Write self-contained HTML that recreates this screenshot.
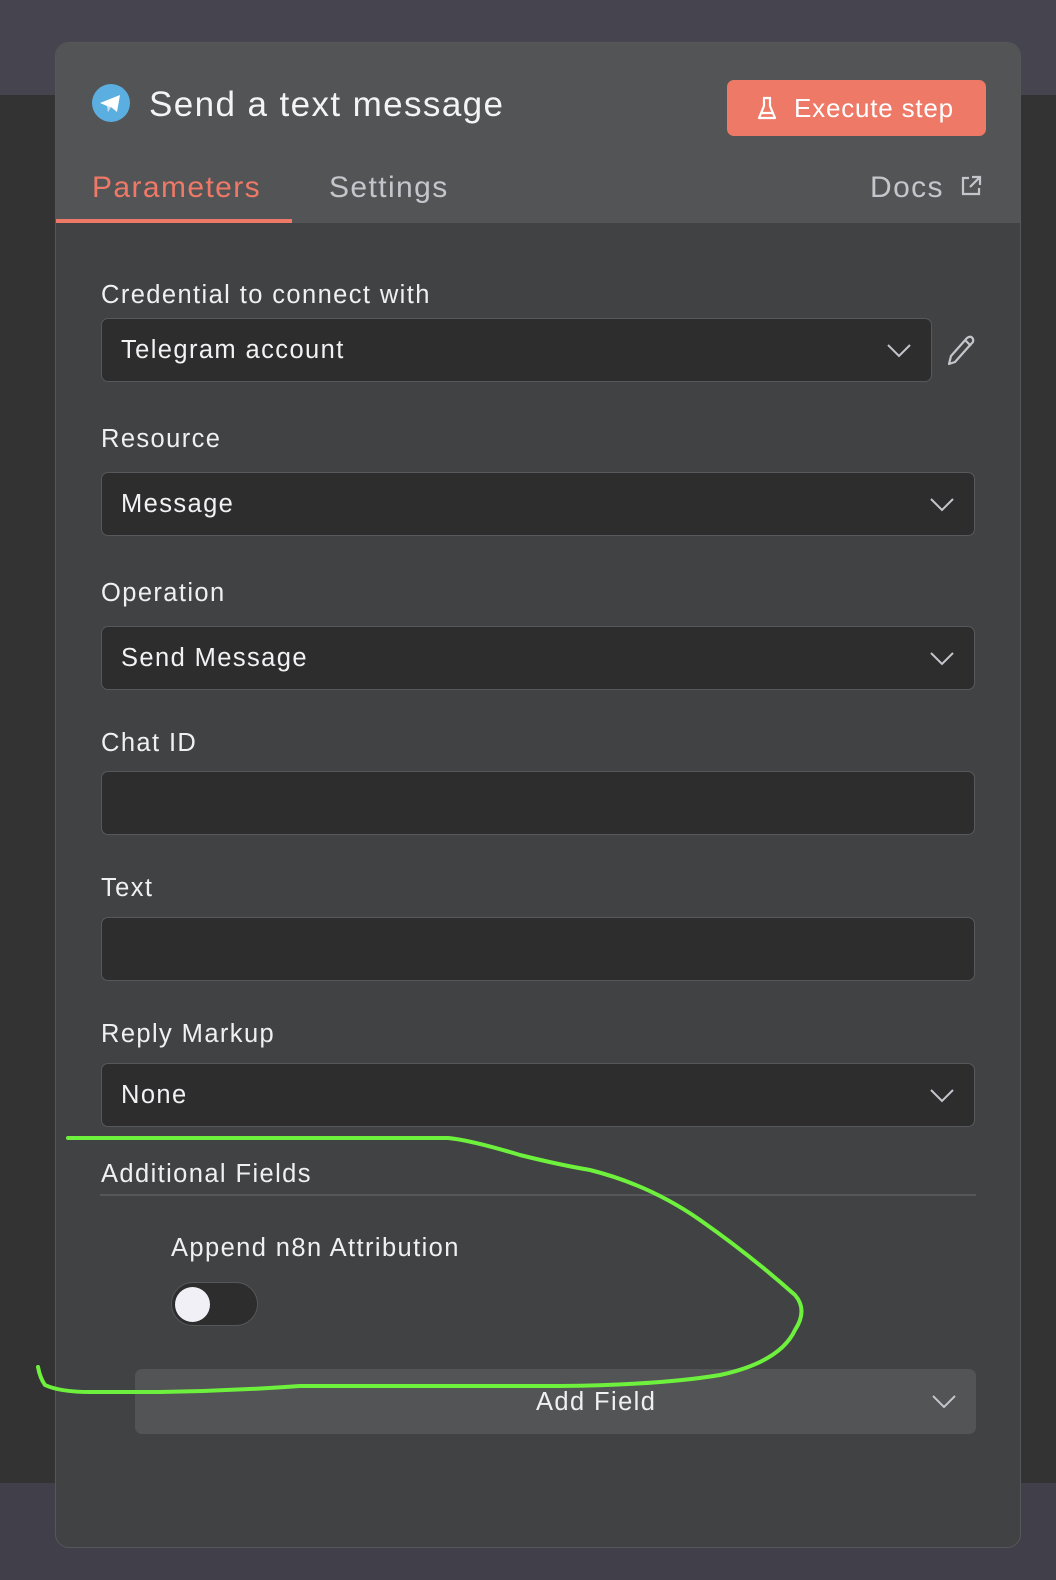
<!DOCTYPE html>
<html><head><meta charset="utf-8"><style>
*{box-sizing:border-box;margin:0;padding:0}
body{width:1056px;height:1580px;position:relative;overflow:hidden;background:#333333;font-family:"Liberation Sans",sans-serif;letter-spacing:1.4px}
.abs{position:absolute}
.lbl{position:absolute;left:101px;color:#f0f0f2;font-size:25.5px;}
.inp{position:absolute;left:101px;width:874px;height:64px;background:#2d2d2e;border:1.5px solid #57585b;border-radius:7px;color:#f2f2f4;font-size:25.5px;padding-left:19px;line-height:63px;}
.chev{position:absolute;right:20px;top:24px;}
</style></head><body>
<div class="abs" style="left:0;top:0;width:1056px;height:95px;background:#45444f"></div>
<div class="abs" style="left:0;top:1483px;width:1056px;height:97px;background:#413f4a"></div>
<div class="abs" style="left:55px;top:42px;width:966px;height:1506px;background:#414244;border:1.5px solid #56575a;border-radius:14px;overflow:hidden">
  <div class="abs" style="left:0;top:0;width:966px;height:180px;background:#535456"></div>
  <div class="abs" style="left:0;top:176px;width:236px;height:4px;background:#ee7967"></div>
</div>
<svg class="abs" style="left:92px;top:84px" width="38" height="38" viewBox="0 0 38 38"><circle cx="19" cy="19" r="19" fill="#5aaee0"/><path d="M8 19 L28 11 L25 28 L19 23 L16 28 L15 22 Z" fill="#fff"/><path d="M15 22 L16 28 L19 23 Z" fill="#c8daea"/></svg>
<div class="abs" style="left:149px;top:85px;color:#f4f4f6;font-size:35px;">Send a text message</div>
<div class="abs" style="left:727px;top:80px;width:259px;height:56px;background:#ee7967;border-radius:7px;color:#fff;font-size:26px;line-height:56px;padding-left:67px;letter-spacing:0.8px">Execute step</div>
<svg class="abs" style="left:756px;top:96px" width="22" height="26" viewBox="0 0 22 26"><path d="M7 2 H15 M8 2 V10 L3 22 H19 L14 10 V2 M5 17 H17" fill="none" stroke="#fff" stroke-width="2.2" stroke-linejoin="round"/></svg>
<div class="abs" style="left:92px;top:171px;color:#ee7967;font-size:30px;">Parameters</div>
<div class="abs" style="left:329px;top:171px;color:#c4c6cc;font-size:30px;">Settings</div>
<div class="abs" style="left:870px;top:171px;color:#c4c6cc;font-size:30px;">Docs</div>
<svg class="abs" style="left:959px;top:174px" width="24" height="24" viewBox="0 0 24 24"><path d="M10 4 H4 V20 H20 V14 M13 3 H21 V11 M21 3 L11 13" fill="none" stroke="#c4c6cc" stroke-width="2.2"/></svg>

<div class="lbl" style="top:281px">Credential to connect with</div>
<div class="inp" style="top:318px;width:831px">Telegram account<svg class="chev" width="24" height="16" viewBox="0 0 24 16"><path d="M1 2 L12 13 L23 2" fill="none" stroke="#c4c6cc" stroke-width="2"/></svg></div>
<svg class="abs" style="left:946px;top:334px" width="30" height="32" viewBox="0 0 30 32"><path d="M5 22 L21 4 Q25 1 27 5 Q28 8 25 10 L9 28 L3 30 Z M19 6 L25 12" fill="none" stroke="#c4c6cc" stroke-width="2.2" stroke-linejoin="round"/></svg>

<div class="lbl" style="top:425px">Resource</div>
<div class="inp" style="top:472px">Message<svg class="chev" width="24" height="16" viewBox="0 0 24 16"><path d="M1 2 L12 13 L23 2" fill="none" stroke="#c4c6cc" stroke-width="2"/></svg></div>
<div class="lbl" style="top:579px">Operation</div>
<div class="inp" style="top:626px">Send Message<svg class="chev" width="24" height="16" viewBox="0 0 24 16"><path d="M1 2 L12 13 L23 2" fill="none" stroke="#c4c6cc" stroke-width="2"/></svg></div>
<div class="lbl" style="top:729px">Chat ID</div>
<div class="inp" style="top:771px"></div>
<div class="lbl" style="top:874px">Text</div>
<div class="inp" style="top:917px"></div>
<div class="lbl" style="top:1020px">Reply Markup</div>
<div class="inp" style="top:1063px">None<svg class="chev" width="24" height="16" viewBox="0 0 24 16"><path d="M1 2 L12 13 L23 2" fill="none" stroke="#c4c6cc" stroke-width="2"/></svg></div>

<div class="lbl" style="top:1160px">Additional Fields</div>
<div class="abs" style="left:100px;top:1194px;width:876px;height:2px;background:#56575a"></div>
<div class="abs" style="left:171px;top:1234px;color:#f0f0f2;font-size:25.5px;">Append n8n Attribution</div>
<div class="abs" style="left:171px;top:1282px;width:87px;height:44px;background:#2d2d2e;border:1.5px solid #56575a;border-radius:22px"></div>
<div class="abs" style="left:175px;top:1287px;width:35px;height:35px;background:#f0f0f6;border-radius:50%"></div>
<div class="abs" style="left:135px;top:1369px;width:841px;height:65px;background:#535456;border-radius:7px;color:#f0f0f2;font-size:25.5px;line-height:67px;padding-left:401px">Add Field<svg class="abs" style="right:20px;top:25px" width="24" height="16" viewBox="0 0 24 16"><path d="M1 2 L12 13 L23 2" fill="none" stroke="#c4c6cc" stroke-width="2"/></svg></div>

<svg class="abs" style="left:0;top:0" width="1056" height="1580"><path d="M68 1138 L448 1138 Q470 1140 520 1155 Q560 1165 590 1170 Q650 1185 700 1220 Q750 1255 795 1295 Q808 1310 795 1330 Q780 1362 720 1375 Q660 1385 560 1386 L300 1386 Q230 1391 160 1392 L90 1392 Q60 1392 45 1385 Q40 1378 38 1367" fill="none" stroke="#6ef13c" stroke-width="4" stroke-linecap="round"/></svg>
</body></html>
